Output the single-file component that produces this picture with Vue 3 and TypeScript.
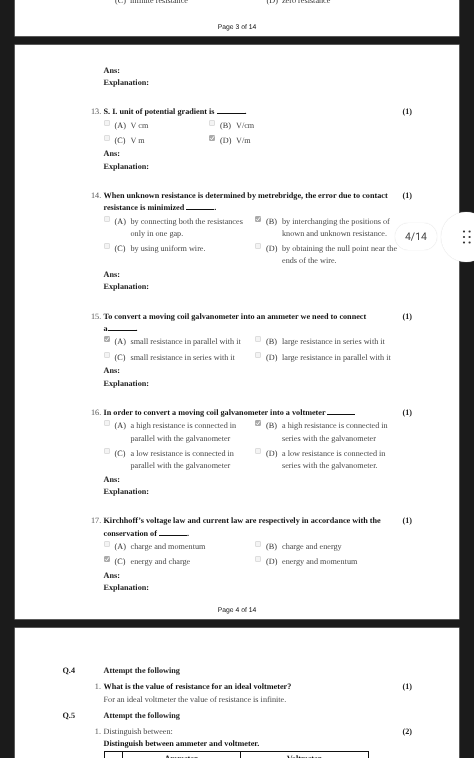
<script setup lang="ts">
interface Opt { label: string; text: string; checked?: boolean }
interface Question { n: number; title: string; blankAfter?: string; opts: Opt[]; col: number }

const questions: Question[] = [
  { n: 13, title: 'S. I. unit of potential gradient is ', blankAfter: '.', col: 105.5, opts: [
    { label: '(A)', text: 'V cm' }, { label: '(B)', text: 'V/cm' },
    { label: '(C)', text: 'V m' }, { label: '(D)', text: 'V/m', checked: true } ] },
  { n: 14, title: 'When unknown resistance is determined by metrebridge, the error due to contact\nresistance is minimized ', blankAfter: '.', col: 151.5, opts: [
    { label: '(A)', text: 'by connecting both the resistances\nonly in one gap.' },
    { label: '(B)', text: 'by interchanging the positions of\nknown and unknown resistance.', checked: true },
    { label: '(C)', text: 'by using uniform wire.' },
    { label: '(D)', text: 'by obtaining the null point near the\nends of the wire.' } ] },
  { n: 15, title: 'To convert a moving coil galvanometer into an ammeter we need to connect\na', blankAfter: '.', col: 151.5, opts: [
    { label: '(A)', text: 'small resistance in parallel with it', checked: true },
    { label: '(B)', text: 'large resistance in series with it' },
    { label: '(C)', text: 'small resistance in series with it' },
    { label: '(D)', text: 'large resistance in parallel with it' } ] },
  { n: 16, title: 'In order to convert a moving coil galvanometer into a voltmeter ', blankAfter: '', col: 151.5, opts: [
    { label: '(A)', text: 'a high resistance is connected in\nparallel with the galvanometer' },
    { label: '(B)', text: 'a high resistance is connected in\nseries with the galvanometer', checked: true },
    { label: '(C)', text: 'a low resistance is connected in\nparallel with the galvanometer' },
    { label: '(D)', text: 'a low resistance is connected in\nseries with the galvanometer.' } ] },
  { n: 17, title: 'Kirchhoff\u2019s voltage law and current law are respectively in accordance with the\nconservation of ', blankAfter: '.', col: 151.5, opts: [
    { label: '(A)', text: 'charge and momentum' },
    { label: '(B)', text: 'charge and energy' },
    { label: '(C)', text: 'energy and charge', checked: true },
    { label: '(D)', text: 'energy and momentum' } ] },
]
</script>

<template>
  <div class="viewer">
    <section class="page first">
      <div class="cut-row">
        <span class="cut-a">(C)&nbsp; infinite resistance</span>
        <span>(D)&nbsp; zero resistance</span>
      </div>
      <footer class="foot foot-first">Page 3 of 14</footer>
    </section>

    <section class="page second">
      <div class="ans-block first-ans">
        <div>Ans:</div>
        <div>Explanation:</div>
      </div>

      <article v-for="q in questions" :key="q.n" class="q">
        <div class="head">
          <span class="num">{{ q.n }}.</span>
          <div class="title">{{ q.title }}<span class="blank"></span>{{ q.blankAfter }}</div>
          <span class="marks">(1)</span>
        </div>
        <div class="opts" :style="{ gridTemplateColumns: q.col + 'px 1fr' }">
          <div v-for="o in q.opts" :key="o.label" class="opt">
            <span class="box" :class="{ on: o.checked }">
              <svg v-if="o.checked" viewBox="0 0 6 6" width="6" height="6"><path d="M1 3.2 2.5 4.7 5 1.3" fill="none" stroke="#fff" stroke-width="1"/></svg>
            </span>
            <span class="lab">{{ o.label }}</span>
            <span class="txt">{{ o.text }}</span>
          </div>
        </div>
        <div class="ans-block">
          <div>Ans:</div>
          <div>Explanation:</div>
        </div>
      </article>

      <footer class="foot foot-second">Page 4 of 14</footer>
    </section>

    <section class="page third">
      <div class="sec">
        <span class="sec-no">Q.4</span>
        <span class="sec-title">Attempt the following</span>
      </div>
      <div class="head sub">
        <span class="num">1.</span>
        <div class="title">What is the value of resistance for an ideal voltmeter?</div>
        <span class="marks">(1)</span>
      </div>
      <div class="plain">For an ideal voltmeter the value of resistance is infinite.</div>
      <div class="sec sec2">
        <span class="sec-no">Q.5</span>
        <span class="sec-title">Attempt the following</span>
      </div>
      <div class="head sub">
        <span class="num">1.</span>
        <div class="lead">Distinguish between:</div>
        <span class="marks">(2)</span>
      </div>
      <div class="plain strong">Distinguish between ammeter and voltmeter.</div>
      <table class="tbl">
        <tbody>
          <tr><th class="c0"></th><th class="c1">Ammeter</th><th class="c2">Voltmeter</th></tr>
        </tbody>
      </table>
    </section>

    <div class="pill">4/14</div>
    <button class="fab" aria-label="Menu">
      <svg viewBox="0 0 10 16" width="10" height="16">
        <g fill="#333">
          <circle cx="2" cy="2.5" r="1.1"/><circle cx="7.6" cy="2.5" r="1.1"/>
          <circle cx="2" cy="8" r="1.1"/><circle cx="7.6" cy="8" r="1.1"/>
          <circle cx="2" cy="13.5" r="1.1"/><circle cx="7.6" cy="13.5" r="1.1"/>
        </g>
      </svg>
    </button>
  </div>
</template>

<style>
html, body { margin: 0; background: #1b1b1b; }
</style>

<style scoped>
.viewer {
  position: relative;
  width: 474px;
  height: 758px;
  overflow: hidden;
  background: #1b1b1b;
  display: flex;
  flex-direction: column;
  gap: 9px;
  font-family: "Liberation Serif", serif;
  font-size: 8.2px;
  line-height: 12.3px;
  text-rendering: geometricPrecision;
  color: #333;
  filter: blur(0.22px);
}
.page {
  margin: 0 15px;
  width: 444px;
  background: #fff;
  box-shadow: 0 0 0 0.5px #999;
  flex: none;
  overflow: hidden;
}
.first { height: 36px; display: flex; flex-direction: column; justify-content: flex-end; }
.cut-row { display: flex; padding-left: 100px; }
.cut-a { width: 151.5px; }
.foot {
  font-family: "Liberation Sans", sans-serif;
  font-size: 6.8px;
  line-height: 10px;
  color: #111;
  text-align: center;
}
.foot-first { margin-top: 15.5px; margin-bottom: 3.5px; }
.second { height: 574px; }
.foot-second { margin-top: 12px; }
.ans-block { margin-left: 88.5px; margin-top: 1.4px; font-weight: 700; color: #222; }
.first-ans { margin-top: 19.5px; }
.q { margin-top: 17px; }
.head { display: flex; align-items: flex-start; padding-left: 76px; }
.num { width: 12.5px; flex: none; color: #555; text-align: right; padding-right: 2.5px; box-sizing: border-box; }
.title { width: 299px; flex: none; font-weight: 700; color: #111; white-space: pre; }
.lead { width: 299px; flex: none; color: #444; }
.marks { font-weight: 700; color: #222; }
.blank { display: inline-block; width: 28px; height: 6px; border-bottom: 1px solid #111; }
.opts { display: grid; margin-left: 88.5px; width: 300px; margin-top: 1.2px; row-gap: 2.8px; }
.opt { display: flex; align-items: flex-start; }
.box {
  width: 6px;
  height: 6px;
  flex: none;
  box-sizing: border-box;
  border: 1px solid #ddd;
  border-radius: 1px;
  background: #f4f4f4;
  display: flex;
}
.box.on { background: #aaa; border-color: #aaa; }
.box svg { margin: -1px; }
.lab { margin-left: 5px; width: 16px; flex: none; }
.txt { white-space: pre; color: #444; }
.third { flex: 1; padding-top: 37px; box-sizing: border-box; }
.sec { display: flex; padding-left: 47.5px; font-weight: 700; color: #222; }
.sec-no { width: 41px; flex: none; }
.sec2 { margin-top: 3.6px; }
.sub { margin-top: 4.2px; }
.plain { margin-left: 88.5px; color: #444; }
.strong { font-weight: 700; color: #111; }
.tbl {
  margin-left: 88.5px;
  border-collapse: collapse;
  table-layout: fixed;
  width: 265px;
  color: #111;
}
.tbl th { border: 1px solid #111; height: 14px; padding: 0; }
.c0 { width: 17px; }
.c1 { width: 117px; }
.pill {
  position: absolute;
  left: 395px;
  top: 223px;
  width: 42px;
  height: 27px;
  border-radius: 14px;
  background: #fff;
  box-shadow: 0 0 1px #ccc;
  font-family: "Roboto", sans-serif;
  font-size: 10.5px;
  line-height: 27px;
  text-align: center;
  color: #444;
}
.fab {
  position: absolute;
  left: 441px;
  top: 212px;
  width: 50px;
  height: 50px;
  padding: 0 0 0 21px;
  border: none;
  border-radius: 50%;
  background: #fff;
  box-shadow: 0 0 1px #ccc;
  display: flex;
  align-items: center;
  justify-content: flex-start;
}
</style>
